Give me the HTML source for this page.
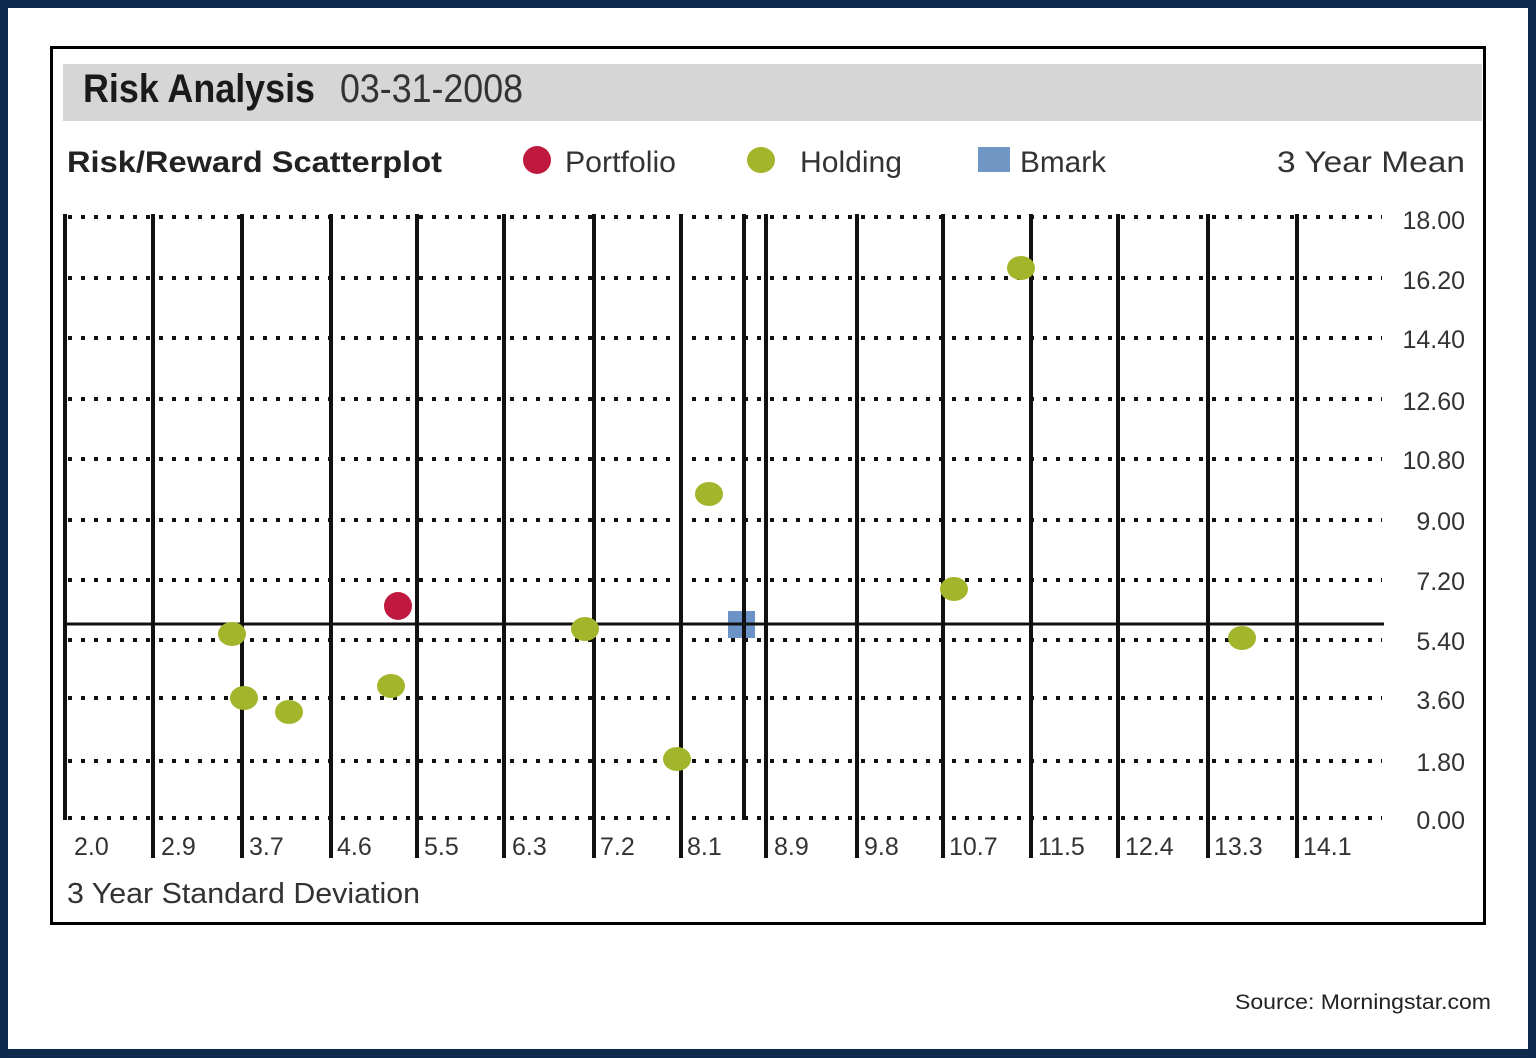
<!DOCTYPE html>
<html><head><meta charset="utf-8"><style>
html,body{margin:0;padding:0;background:#0d2a4d;}
svg{display:block}
</style></head><body>
<svg width="1536" height="1058" viewBox="0 0 1536 1058" xmlns="http://www.w3.org/2000/svg" font-family="'Liberation Sans', 'DejaVu Sans', sans-serif">
<rect x="0" y="0" width="1536" height="1058" fill="#0d2a4d"/>
<rect x="8" y="8" width="1520" height="1041" fill="#ffffff"/>
<rect x="51.5" y="47.5" width="1433" height="876" fill="#fff" stroke="#000" stroke-width="3"/>
<rect x="63" y="64" width="1419" height="57" fill="#d6d6d6"/>
<text x="83" y="102" font-size="40" font-weight="bold" fill="#1a1a1a" textLength="232" lengthAdjust="spacingAndGlyphs">Risk Analysis</text>
<text x="340" y="102" font-size="40" fill="#333" textLength="183" lengthAdjust="spacingAndGlyphs">03-31-2008</text>
<text x="67" y="172" font-size="30" font-weight="bold" fill="#222" textLength="375" lengthAdjust="spacingAndGlyphs">Risk/Reward Scatterplot</text>
<circle cx="537" cy="160" r="14" fill="#c0193f"/>
<text x="565" y="172" font-size="30" fill="#333" textLength="111" lengthAdjust="spacingAndGlyphs">Portfolio</text>
<ellipse cx="761" cy="160" rx="14" ry="13" fill="#a3b52a"/>
<text x="800" y="172" font-size="30" fill="#333" textLength="102" lengthAdjust="spacingAndGlyphs">Holding</text>
<rect x="978" y="147" width="32" height="25" fill="#7096c4"/>
<text x="1020" y="172" font-size="30" fill="#333" textLength="86" lengthAdjust="spacingAndGlyphs">Bmark</text>
<text x="1277" y="172" font-size="30" fill="#333" textLength="188" lengthAdjust="spacingAndGlyphs">3  Year Mean</text>
<g stroke="#111" stroke-width="4" stroke-dasharray="4,9" stroke-linecap="butt">
<line x1="68" y1="217" x2="1382" y2="217"/>
<line x1="68" y1="278" x2="1382" y2="278"/>
<line x1="68" y1="338" x2="1382" y2="338"/>
<line x1="68" y1="399" x2="1382" y2="399"/>
<line x1="68" y1="459" x2="1382" y2="459"/>
<line x1="68" y1="520" x2="1382" y2="520"/>
<line x1="68" y1="580" x2="1382" y2="580"/>
<line x1="68" y1="640" x2="1382" y2="640"/>
<line x1="68" y1="698" x2="1382" y2="698"/>
<line x1="68" y1="761" x2="1382" y2="761"/>
<line x1="68" y1="818" x2="1382" y2="818"/>
</g>
<g stroke="#111" stroke-width="4">
<line x1="65" y1="214" x2="65" y2="820"/>
<line x1="153" y1="214" x2="153" y2="858"/>
<line x1="242" y1="214" x2="242" y2="858"/>
<line x1="331" y1="214" x2="331" y2="858"/>
<line x1="417" y1="214" x2="417" y2="858"/>
<line x1="504" y1="214" x2="504" y2="858"/>
<line x1="594" y1="214" x2="594" y2="858"/>
<line x1="681" y1="214" x2="681" y2="858"/>
<line x1="744" y1="214" x2="744" y2="820"/>
<line x1="766" y1="214" x2="766" y2="858"/>
<line x1="857" y1="214" x2="857" y2="858"/>
<line x1="943" y1="214" x2="943" y2="858"/>
<line x1="1031" y1="214" x2="1031" y2="858"/>
<line x1="1118" y1="214" x2="1118" y2="858"/>
<line x1="1208" y1="214" x2="1208" y2="858"/>
<line x1="1297" y1="214" x2="1297" y2="858"/>
</g>
<line x1="65" y1="624" x2="1384" y2="624" stroke="#111" stroke-width="3"/>
<g fill="#333" font-size="25" text-anchor="end">
<text x="1465" y="229">18.00</text>
<text x="1465" y="289">16.20</text>
<text x="1465" y="348">14.40</text>
<text x="1465" y="410">12.60</text>
<text x="1465" y="469">10.80</text>
<text x="1465" y="530">9.00</text>
<text x="1465" y="590">7.20</text>
<text x="1465" y="650">5.40</text>
<text x="1465" y="709">3.60</text>
<text x="1465" y="771">1.80</text>
<text x="1465" y="829">0.00</text>
</g>
<g fill="#333" font-size="25">
<text x="74" y="855">2.0</text>
<text x="161" y="855">2.9</text>
<text x="249" y="855">3.7</text>
<text x="337" y="855">4.6</text>
<text x="424" y="855">5.5</text>
<text x="512" y="855">6.3</text>
<text x="600" y="855">7.2</text>
<text x="687" y="855">8.1</text>
<text x="774" y="855">8.9</text>
<text x="864" y="855">9.8</text>
<text x="949" y="855">10.7</text>
<text x="1038" y="855">11.5</text>
<text x="1125" y="855">12.4</text>
<text x="1214" y="855">13.3</text>
<text x="1303" y="855">14.1</text>
</g>
<text x="67" y="903" font-size="29" fill="#333" textLength="353" lengthAdjust="spacingAndGlyphs">3 Year Standard Deviation</text>
<g fill="#a3b52a">
<ellipse cx="1021" cy="268" rx="14" ry="12"/>
<ellipse cx="709" cy="494" rx="14" ry="12"/>
<ellipse cx="954" cy="589" rx="14" ry="12"/>
<ellipse cx="232" cy="634" rx="14" ry="12"/>
<ellipse cx="585" cy="629" rx="14" ry="12"/>
<ellipse cx="1242" cy="638" rx="14" ry="12"/>
<ellipse cx="244" cy="698" rx="14" ry="12"/>
<ellipse cx="289" cy="712" rx="14" ry="12"/>
<ellipse cx="391" cy="686" rx="14" ry="12"/>
<ellipse cx="677" cy="759" rx="14" ry="12"/>
</g>
<circle cx="398" cy="606" r="14" fill="#c0193f"/>
<rect x="728" y="611" width="27" height="27" fill="#6b93c8"/>
<line x1="744" y1="611" x2="744" y2="638" stroke="#111" stroke-width="4"/>
<line x1="728" y1="624" x2="755" y2="624" stroke="#111" stroke-width="3"/>
<text x="1235" y="1009" font-size="21" fill="#222" textLength="256" lengthAdjust="spacingAndGlyphs">Source: Morningstar.com</text>
</svg>
</body></html>
